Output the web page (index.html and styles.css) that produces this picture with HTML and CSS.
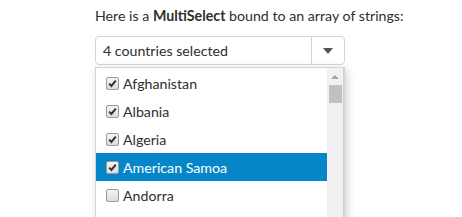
FILE: index.html
```html
<!DOCTYPE html>
<html lang="en">
<head>
    <meta charset="UTF-8">
    <title>MultiSelect</title>
    <link rel="stylesheet" href="styles.css">
</head>
<body>
    <div class="demo">
        <p class="intro">Here is a <strong>MultiSelect</strong> bound to an array of strings:</p>

        <!-- Collapsed input -->
        <div class="multiselect">
            <span class="summary">4 countries selected</span>
            <span class="toggle"><span class="arrow"></span></span>
        </div>

        <!-- Popup list -->
        <div class="popup">
            <ul class="options">
                <li class="option"><span class="check checked"></span>Afghanistan</li>
                <li class="option"><span class="check checked"></span>Albania</li>
                <li class="option"><span class="check checked"></span>Algeria</li>
                <li class="option active"><span class="check checked"></span>American Samoa</li>
                <li class="option"><span class="check"></span>Andorra</li>
                <li class="option"><span class="check"></span></li>
            </ul>
            <div class="scrollbar">
                <span class="scroll-up"></span>
                <span class="thumb"></span>
            </div>
        </div>
    </div>
</body>
</html>
```

FILE: styles.css
```css
body {
    margin: 0;
    font-family: Lato, "Open Sans", sans-serif;
    font-size: 14px;
    color: #2e2e2e;
    background: #fff;
    overflow: hidden;
}
.demo {
    width: 250px;
    margin-left: 95px;
    padding-top: 6px;
}
.intro {
    margin: 0 0 10px;
    line-height: 20px;
    white-space: nowrap;
    font-size: 14.2px;
}
.intro strong {
    font-weight: 700;
}
.multiselect {
    display: flex;
    height: 29px;
    border: 1px solid #d5d5d5;
    border-radius: 4px;
    box-sizing: border-box;
    background: #fff;
}
.summary {
    flex: 1;
    padding-left: 7px;
    line-height: 28px;
    font-size: 14.2px;
}
.toggle {
    width: 32px;
    border-left: 1px solid #d5d5d5;
    display: flex;
    align-items: center;
    justify-content: center;
}
.arrow {
    width: 0;
    height: 0;
    border-left: 5px solid transparent;
    border-right: 5px solid transparent;
    border-top: 6px solid #555;
}
.popup {
    display: flex;
    margin-top: 2px;
    padding-top: 1px;
    height: 160px;
    border: 1px solid #d5d5d5;
    border-bottom: none;
    box-shadow: 2px 2px 8px rgba(0, 0, 0, 0.18);
    background: #fff;
}
.options {
    flex: 1;
    margin: 0;
    padding: 0;
    list-style: none;
}
.option {
    display: flex;
    align-items: center;
    height: 28px;
    padding-left: 10px;
    font-size: 14.2px;
}
.option.active {
    background: #0686c8;
    color: #fff;
}
.check {
    width: 11px;
    height: 11px;
    margin-right: 4px;
    border: 1px solid #9a9a9a;
    border-radius: 2px;
    background: linear-gradient(#f4f4f4, #dcdcdc);
}
.check.checked {
    background: url("data:image/svg+xml;utf8,<svg xmlns='http://www.w3.org/2000/svg' viewBox='0 0 11 11'><path d='M2.2 5.6 L4.4 8 L8.8 2.6' fill='none' stroke='%23333' stroke-width='2'/></svg>") center / 11px 11px no-repeat, linear-gradient(#f4f4f4, #dcdcdc);
}
.scrollbar {
    width: 16px;
    margin-top: -1px;
    background: #f1f1f1;
    border-right: 1px solid #cfcfcf;
    display: flex;
    flex-direction: column;
    align-items: center;
}
.scroll-up {
    margin-top: 7px;
    width: 0;
    height: 0;
    border-left: 4px solid transparent;
    border-right: 4px solid transparent;
    border-bottom: 4px solid #a3a3a3;
}
.thumb {
    margin-top: 6px;
    width: 13px;
    height: 18px;
    background: #c1c1c1;
}
```
